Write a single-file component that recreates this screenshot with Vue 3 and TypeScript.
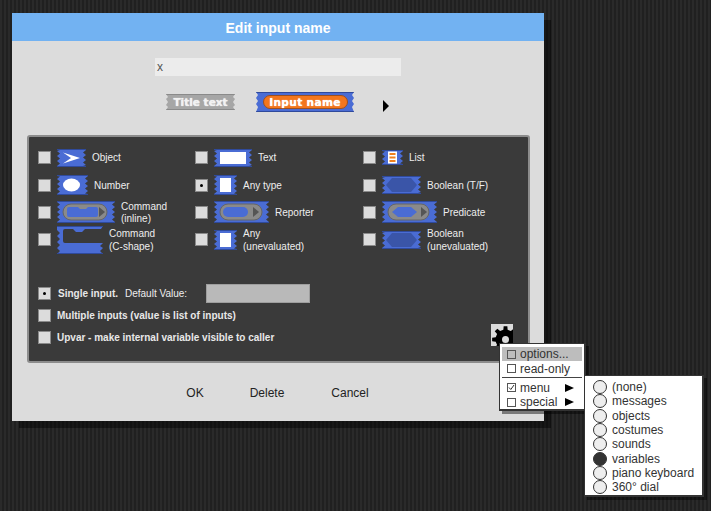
<script setup lang="ts">
type Shape = 'arrow' | 'ellipse' | 'rect' | 'list' | 'hex' | 'cmd' | 'rep' | 'pred' | 'cshape'
interface Slot { label: string[]; shape: Shape; w: number; h: number; on?: boolean; pill?: number; tri?: number }

const slots: Slot[] = [
  { label: ['Object'], shape: 'arrow', w: 29, h: 18 },
  { label: ['Text'], shape: 'rect', w: 38, h: 18 },
  { label: ['List'], shape: 'list', w: 21, h: 15 },
  { label: ['Number'], shape: 'ellipse', w: 31, h: 20 },
  { label: ['Any type'], shape: 'rect', w: 23, h: 20, on: true },
  { label: ['Boolean (T/F)'], shape: 'hex', w: 39, h: 18 },
  { label: ['Command', '(inline)'], shape: 'cmd', w: 58, h: 22, pill: 44, tri: 42 },
  { label: ['Reporter'], shape: 'rep', w: 55, h: 22, pill: 42, tri: 39 },
  { label: ['Predicate'], shape: 'pred', w: 55, h: 22, pill: 41, tri: 39 },
  { label: ['Command', '(C-shape)'], shape: 'cshape', w: 46, h: 28 },
  { label: ['Any', '(unevaluated)'], shape: 'rect', w: 23, h: 20 },
  { label: ['Boolean', '(unevaluated)'], shape: 'hex', w: 39, h: 18 }
]

const sourceItems = ['(none)', 'messages', 'objects', 'costumes', 'sounds', 'variables', 'piano keyboard', '360° dial']

function tab(w: number, h: number): string {
  let d = `M0 1 L${w} 1`
  let y = 1
  let out = true
  while (y < h - 1) {
    y = Math.min(y + 2.5, h - 1)
    d += ` L${out ? w - 3 : w} ${y}`
    out = !out
  }
  d += ` L${w} ${h - 1} L0 ${h - 1}`
  y = h - 1
  out = true
  while (y > 1) {
    y = Math.max(y - 2.5, 1)
    d += ` L${out ? 3 : 0} ${y}`
    out = !out
  }
  return d + ' Z'
}

function hex(w: number, h: number): string {
  const m = h / 2
  return `M10 2 L${w - 10} 2 L${w - 4} ${m} L${w - 10} ${h - 2} L10 ${h - 2} L4 ${m} Z`
}

function gear(cx: number, cy: number, outer: number, inner: number, hole: number): string {
  const pts: string[] = []
  const teeth = 8
  for (let i = 0; i < teeth; i++) {
    const a = (i / teeth) * Math.PI * 2
    const step = Math.PI / teeth
    const spec: [number, number][] = [
      [a - step * 0.55, inner],
      [a - step * 0.35, outer],
      [a + step * 0.35, outer],
      [a + step * 0.55, inner]
    ]
    for (const [t, r] of spec) {
      pts.push(`${(cx + Math.cos(t) * r).toFixed(2)} ${(cy + Math.sin(t) * r).toFixed(2)}`)
    }
  }
  return `M${pts.join(' L')} Z M${cx + hole} ${cy} a${hole} ${hole} 0 1 0 ${-2 * hole} 0 a${hole} ${hole} 0 1 0 ${2 * hole} 0 Z`
}
</script>

<template>
  <div class="page">
    <section class="dialog">
      <h1 class="title">Edit input name</h1>

      <div class="name-field">x</div>

      <div class="fragments">
        <span class="chip-title">Title text</span>
        <span class="chip-input"><span class="chip-pill">Input name</span></span>
        <span class="more"></span>
      </div>

      <div class="panel">
        <div class="slots">
          <div v-for="s in slots" :key="s.label.join(' ')" class="slot">
            <span class="box" :class="{ on: s.on }"></span>
            <svg class="glyph" :width="s.w" :height="s.h" :viewBox="`0 0 ${s.w} ${s.h}`">
              <template v-if="s.shape === 'cshape'">
                <path d="M0 0 H46 L44 3 H28 L25 6 H19 L16 3 H8 Q6 3 6 5 V15 Q6 17 8 17 H46 L43 20 L46 22 L43 25 L46 28 H0 L3 25 L0 22 L3 19 L0 16 L3 13 L0 10 L3 7 L0 4 Z" fill="#4a6cd4" />
                <path d="M0 .5 H46 M0 27.5 H46" stroke="#2f4a9c" stroke-width="1" />
              </template>
              <template v-else>
                <path :d="tab(s.w, s.h)" fill="#4a6cd4" />
                <path :d="`M0 .5 H${s.w} M0 ${s.h - 0.5} H${s.w}`" stroke="#2f4a9c" stroke-width="1" />
              </template>
              <polygon v-if="s.shape === 'arrow'" points="6,3.5 23,9 6,14.5 14,9" fill="#fff" />
              <ellipse v-if="s.shape === 'ellipse'" cx="14.5" cy="10" rx="8.5" ry="6.5" fill="#fff" />
              <rect v-if="s.shape === 'rect'" x="6" y="3" :width="s.w - 12" :height="s.h - 6" fill="#fff" />
              <g v-if="s.shape === 'list'">
                <rect x="6" y="1.5" width="9" height="12" fill="#fff" />
                <rect x="7.5" y="3" width="6" height="2" fill="#f0801e" />
                <rect x="7.5" y="6.5" width="6" height="2" fill="#f0801e" />
                <rect x="7.5" y="10" width="6" height="2" fill="#f0801e" />
              </g>
              <path v-if="s.shape === 'hex'" :d="hex(s.w, s.h)" fill="#3a55a8" />
              <g v-if="s.pill">
                <rect x="6" y="3" :width="s.pill" height="16" rx="8" fill="#8a8a8a" stroke="#666" />
                <polygon :points="`${s.tri},6 ${(s.tri ?? 0) + 6},11 ${s.tri},16`" fill="#555" />
                <path v-if="s.shape === 'cmd'" d="M12 6 H21 L23 8 H29 L31 6 H39 Q41 6 41 8 V14 Q41 16 39 16 H12 Q10 16 10 14 V8 Q10 6 12 6 Z" fill="#4a6cd4" />
                <rect v-if="s.shape === 'rep'" x="9" y="6" width="25" height="10" rx="5" fill="#4a6cd4" />
                <polygon v-if="s.shape === 'pred'" points="10,11 16,6 29,6 35,11 29,16 16,16" fill="#4a6cd4" />
              </g>
            </svg>
            <span class="slot-label">
              <span v-for="line in s.label" :key="line" class="line">{{ line }}</span>
            </span>
          </div>
        </div>

        <div class="options">
          <div class="option">
            <span class="box on"></span>
            <span class="strong single">Single input.</span>
            <span class="default-label">Default Value:</span>
            <span class="default-field"></span>
          </div>
          <div class="option">
            <span class="box"></span>
            <span class="strong">Multiple inputs (value is list of inputs)</span>
          </div>
          <div class="option">
            <span class="box"></span>
            <span class="strong">Upvar - make internal variable visible to caller</span>
          </div>
        </div>

        <div class="gear">
          <svg width="22" height="22" viewBox="0 0 22 22">
            <path :d="gear(14.5, 15.5, 13.5, 10, 3.5)" fill="#000" fill-rule="evenodd" />
          </svg>
        </div>
      </div>

      <div class="actions">
        <span class="action">OK</span>
        <span class="action">Delete</span>
        <span class="action">Cancel</span>
      </div>
    </section>

    <div class="menu menu-main">
      <div class="mi hot"><span class="tick"></span>options...</div>
      <div class="mi"><span class="tick"></span>read-only</div>
      <div class="sep"></div>
      <div class="mi">
        <span class="tick">
          <svg width="7" height="7" viewBox="0 0 7 7"><path d="M1 3.5 L2.8 5.5 L6 1" fill="none" stroke="#333" stroke-width="1" /></svg>
        </span>menu<span class="caret"></span>
      </div>
      <div class="mi"><span class="tick"></span>special<span class="caret"></span></div>
    </div>

    <div class="menu menu-sub">
      <div v-for="item in sourceItems" :key="item" class="ri">
        <span class="radio" :class="{ picked: item === 'variables' }"></span>{{ item }}
      </div>
    </div>
  </div>
</template>

<style>
html, body { margin: 0; background: #222; }
</style>

<style scoped>
.page {
  position: relative;
  width: 711px;
  height: 511px;
  overflow: hidden;
  padding: 13px 0 0 12px;
  box-sizing: border-box;
  font-family: "Liberation Sans", Arial, sans-serif;
  background: repeating-linear-gradient(90deg, #2a2a2a 0 2px, #202020 2px 4px);
}
.dialog {
  width: 532px;
  height: 408px;
  background: #dcdcdc;
  box-shadow: 7px 7px 0 rgba(0, 0, 0, .45);
  display: flex;
  flex-direction: column;
  align-items: flex-start;
}
.title {
  margin: 0;
  width: 100%;
  height: 28px;
  line-height: 30px;
  background: #72b2f2;
  color: #fff;
  text-align: center;
  font-size: 14px;
  font-weight: 700;
}
.name-field {
  margin: 17px 0 0 143px;
  width: 244px;
  height: 18px;
  padding-left: 2px;
  background: #ececec;
  color: #555;
  font-size: 12px;
  line-height: 19px;
}
.fragments {
  display: flex;
  align-items: center;
  margin: 16px 0 0 154px;
  height: 20px;
}
.chip-title {
  width: 69px;
  height: 16px;
  box-sizing: border-box;
  background: #a6a6a6;
  border-top: 1px solid #8a8a8a;
  border-bottom: 1px solid #8a8a8a;
  color: #f2f2f2;
  font: 700 10.5px/14px "DejaVu Sans", sans-serif;
  text-align: center;
  text-shadow: 0 0 1px #fff;
  clip-path: polygon(0 0, 69px 0, 67px 3px, 69px 5px, 67px 8px, 69px 11px, 67px 13px, 69px 16px, 0 16px, 2px 13px, 0 11px, 2px 8px, 0 5px, 2px 3px);
}
.chip-input {
  margin-left: 21px;
  width: 98px;
  height: 20px;
  box-sizing: border-box;
  background: #4a6cd4;
  border-top: 1px solid #2f4a9c;
  border-bottom: 1px solid #2f4a9c;
  display: flex;
  align-items: center;
  justify-content: center;
  clip-path: polygon(0 0, 98px 0, 96px 3px, 98px 6px, 96px 9px, 98px 12px, 96px 15px, 98px 20px, 0 20px, 2px 15px, 0 12px, 2px 9px, 0 6px, 2px 3px);
}
.chip-pill {
  width: 85px;
  height: 14px;
  border-radius: 8px;
  background: #f3761d;
  border: 1px solid #9c5020;
  box-sizing: border-box;
  color: #fff;
  font: 700 10.5px/12px "DejaVu Sans", sans-serif;
  letter-spacing: .4px;
  text-align: center;
  text-shadow: 0 0 1px #fff;
}
.more {
  margin: 8px 0 0 29px;
  width: 0;
  height: 0;
  border-left: 6px solid #000;
  border-top: 6px solid transparent;
  border-bottom: 6px solid transparent;
}
.panel {
  position: relative;
  box-sizing: border-box;
  margin: 23px 0 0 15px;
  width: 503px;
  height: 228px;
  background: #3a3a3a;
  border: 2px solid #8c8c8c;
  border-radius: 3px;
  padding: 7px 0 0 9px;
  color: #eee;
  font-size: 10px;
}
.slots {
  display: grid;
  grid-template-columns: 157px 168px 1fr;
  grid-auto-rows: 27.4px;
}
.slot {
  display: flex;
  align-items: center;
}
.box {
  position: relative;
  flex: none;
  width: 13px;
  height: 13px;
  box-sizing: border-box;
  background: #dcdcdc;
  border: 1px solid #8a8a8a;
}
.box.on::after {
  content: "";
  position: absolute;
  left: 4px;
  top: 4px;
  width: 3px;
  height: 3px;
  border-radius: 50%;
  background: #000;
}
.glyph {
  flex: none;
  margin: 0 6px 0 6px;
}
.slot-label {
  display: flex;
  flex-direction: column;
  line-height: 12.5px;
  padding-top: 2px;
}
.line { display: block; white-space: nowrap; }
.options {
  margin-top: 29px;
}
.option {
  display: flex;
  align-items: center;
  height: 22px;
}
.strong {
  margin-left: 6px;
  font-weight: 700;
  color: #e8e8e8;
}
.single { margin-left: 7px; }
.default-label { margin-left: 7px; }
.default-field {
  margin-left: 19px;
  width: 104px;
  height: 19px;
  box-sizing: border-box;
  background: #b9b9b9;
  border: 1px solid #9e9e9e;
}
.gear {
  position: absolute;
  left: 462px;
  top: 187px;
  width: 22px;
  height: 22px;
  background: #dcdcdc;
}
.gear svg { display: block; }
.actions {
  margin: 23px 0 0 147px;
  display: grid;
  grid-template-columns: 72px 72px 94px;
  font-size: 12px;
  color: #222;
}
.action { text-align: center; }
.menu {
  position: absolute;
  box-sizing: border-box;
  background: #fff;
  border: 1px solid #333;
  border-width: 1px 2px 2px 1px;
  box-shadow: 3px 3px 0 rgba(0, 0, 0, .45);
  font-size: 12px;
  color: #333;
}
.menu-main {
  left: 499px;
  top: 343px;
  width: 87px;
  height: 68px;
  padding: 3px 2px;
}
.mi {
  display: flex;
  align-items: center;
  height: 14.4px;
  padding-left: 5px;
  line-height: 14px;
}
.mi.hot { background: #bdbdbd; }
.tick {
  display: inline-flex;
  align-items: center;
  justify-content: center;
  width: 7px;
  height: 7px;
  box-sizing: content-box;
  border: 1px solid #555;
  margin-right: 4px;
  flex: none;
}
.caret {
  margin-left: auto;
  margin-right: 8px;
  width: 0;
  height: 0;
  border-left: 9px solid #000;
  border-top: 4px solid transparent;
  border-bottom: 4px solid transparent;
}
.sep {
  height: 1px;
  margin: 1px 0 3px;
  background: #444;
}
.menu-sub {
  left: 584px;
  top: 375px;
  width: 120px;
  height: 122px;
  padding: 4px 0 0 8px;
}
.ri {
  display: flex;
  align-items: center;
  height: 14.3px;
}
.radio {
  flex: none;
  width: 14px;
  height: 14px;
  box-sizing: border-box;
  border-radius: 50%;
  background: #eee;
  border: 1px solid #333;
  margin-right: 5px;
}
.radio.picked { background: #333; }
</style>
